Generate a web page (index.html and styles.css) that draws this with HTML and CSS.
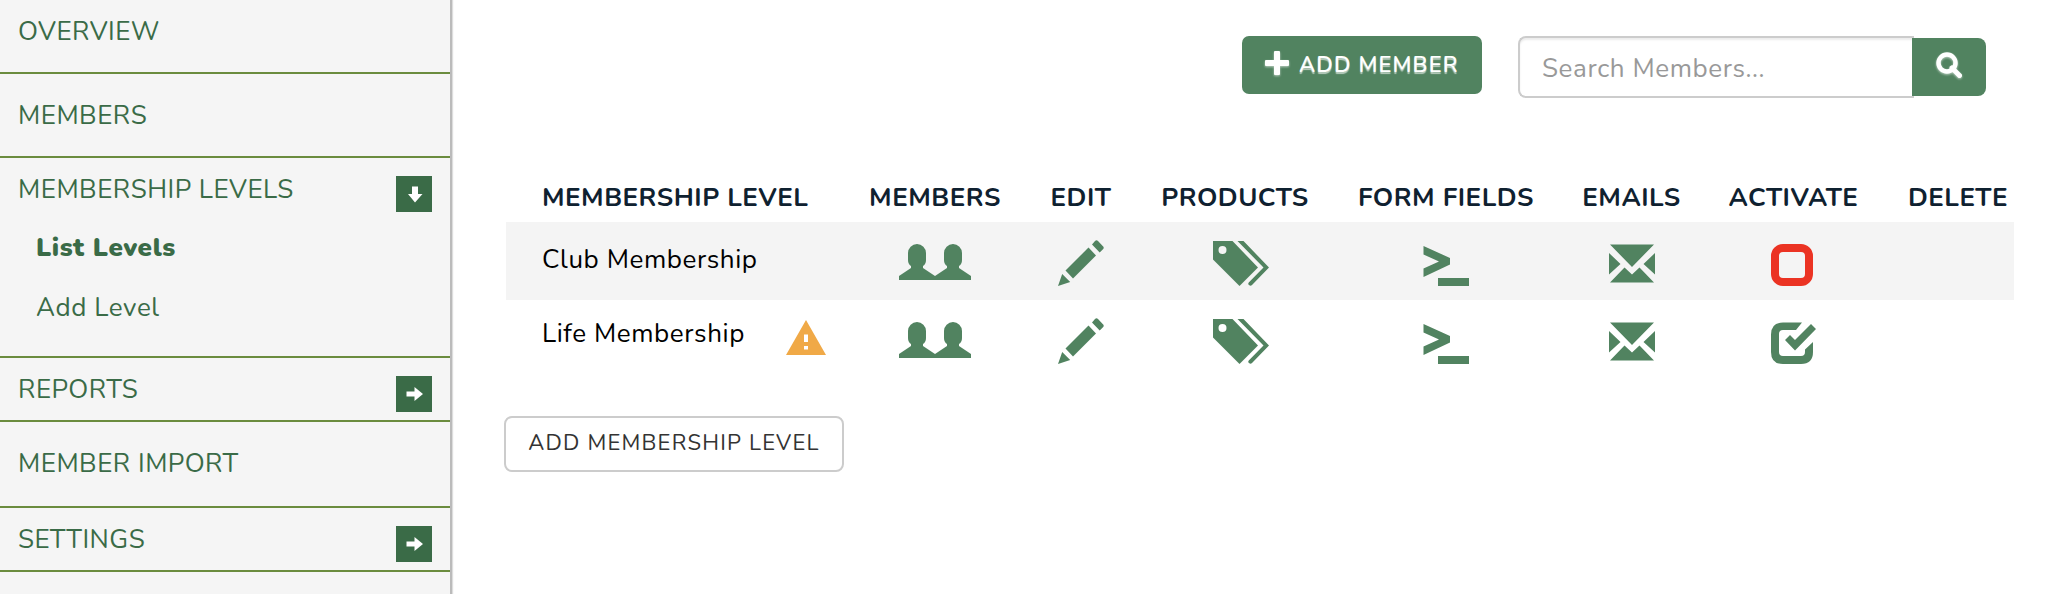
FILE: index.html
```html
<!DOCTYPE html>
<html lang="en">
	<head>
		<meta charset="utf-8">
		<title>Membership Levels</title>
		<link rel="stylesheet" href="styles.css">
	</head>
	<body>
		<svg class="sprite" width="0" height="0">
			<symbol id="right" viewBox="0 0 36 36"><path d="M10.5 15.5h8V11l8.5 7-8.5 7v-4.5h-8z"/></symbol>
			<symbol id="down" viewBox="0 0 36 36"><path d="M16 10.500h6v7.500h4.500L19 26.500 12 18h4z"/></symbol>
			<symbol id="people" viewBox="0 0 72 36"><path id="man" d="M0 36v-4l12-8v-2q-3-2-3-6V9a9 9 0 0 1 18 0v7q0 4-3 6v2l12 8v4z"/><use href="#man" x="36"/></symbol>
			<symbol id="pencil" viewBox="0 0 46 46"><path d="M0 46l4.200-12 8 8zM7.500 30.500L30.500 7.500 38 15.500 15 38.500zM34 4.500L37 1q1.500-1.500 3 0l5.200 5.500q1 1.200 0 2.500L41.700 12.500z"/></symbol>
			<symbol id="tags" viewBox="0 0 56 45"><path fill-rule="evenodd" d="M0 0h19.500L45 26.500 26.500 45 0 18.500zM9.500 5a4 4 0 1 0 0 8 4 4 0 1 0 0-8z"/><path d="M24.500 0h6L56 26.500 39 44q-1.500 1.500-3 0-1.500-1.300 0-2.700L50.500 26.500z"/></symbol>
			<symbol id="console" viewBox="0 0 46 40"><path d="M.5 0L27 12v6.500L.5 31v-8.500L16 15.500.5 8.500zM15 32h31v8H15z"/></symbol>
			<symbol id="mail" viewBox="0 0 46 39"><path d="M1 .5h44L23 23zM0 9l11.500 11L0 30.500zM46 9L34.500 20 46 30.500zM15.500 23.500l7.500 7 7.500-7L45 38.500H1z"/></symbol>
			<symbol id="box" viewBox="0 0 46 42"><rect x="4" y="4" width="34" height="34" rx="8" fill="none" stroke="currentColor" stroke-width="8"/></symbol>
			<symbol id="check" viewBox="0 0 46 42"><path d="M31 .5L25 8H12q-4 0-4 4v18q0 4 4 4h18q4 0 4-4v-2.500L42 20v10q0 12-12 12H12Q0 42 0 30V12.500Q0 .5 12 .5zM14 18l5-5 5 5L40 2l5 5-21 21.500z"/></symbol>
			<symbol id="warning" viewBox="0 0 40 35"><path fill-rule="evenodd" d="M20 0l20 35H0zM18 14.500v7.500h4v-7.500zM18 26v3.500h4V26z"/></symbol>
			<symbol id="plus" viewBox="0 0 24 24"><path d="M9 1q0-1 1-1h4q1 0 1 1v8h8q1 0 1 1v4q0 1-1 1h-8v8q0 1-1 1h-4q-1 0-1-1v-8H1q-1 0-1-1v-4q0-1 1-1h8z"/></symbol>
			<symbol id="search" viewBox="0 0 26 26"><path d="M16 16l7.500 7.500" stroke="currentColor" stroke-width="5" stroke-linecap="round"/><circle cx="11" cy="11" r="8.500" fill="none" stroke="currentColor" stroke-width="4.500"/></symbol>
		</svg>
		<div class="page">
			<ul class="sidebar">
				<li class="overview"><a>OVERVIEW</a></li>
				<li class="members"><a>MEMBERS</a></li>
				<li class="levels">
					<div class="parent"><a>MEMBERSHIP LEVELS</a><span class="toggle"><svg><use href="#down"/></svg></span></div>
					<ul class="submenu">
						<li class="active"><a>List Levels</a></li>
						<li><a>Add Level</a></li>
					</ul>
				</li>
				<li><div class="parent"><a>REPORTS</a><span class="toggle"><svg><use href="#right"/></svg></span></div></li>
				<li class="import"><a>MEMBER IMPORT</a></li>
				<li><div class="parent"><a>SETTINGS</a><span class="toggle"><svg><use href="#right"/></svg></span></div></li>
			</ul>
			<div class="content">
				<div class="toolbar">
					<button class="btn-add"><svg class="plus"><use href="#plus"/></svg><span>ADD MEMBER</span></button>
					<div class="search">
						<input type="text" placeholder="Search Members...">
						<button><svg><use href="#search"/></svg></button>
					</div>
				</div>
				<table>
					<colgroup>
						<col class="c-level"><col class="c-members"><col class="c-edit"><col class="c-products"><col class="c-fields"><col class="c-emails"><col class="c-activate"><col class="c-delete">
					</colgroup>
					<thead>
						<tr>
							<th class="name">MEMBERSHIP LEVEL</th>
							<th>MEMBERS</th>
							<th>EDIT</th>
							<th>PRODUCTS</th>
							<th>FORM FIELDS</th>
							<th>EMAILS</th>
							<th>ACTIVATE</th>
							<th class="delete">DELETE</th>
						</tr>
					</thead>
					<tbody>
						<tr class="odd">
							<td class="name"><div><span class="club">Club Membership</span></div></td>
							<td><svg class="people"><use href="#people"/></svg></td>
							<td><svg class="pencil"><use href="#pencil"/></svg></td>
							<td><svg class="tags"><use href="#tags"/></svg></td>
							<td><svg class="console"><use href="#console"/></svg></td>
							<td><svg class="mail"><use href="#mail"/></svg></td>
							<td><svg class="box off"><use href="#box"/></svg></td>
							<td></td>
						</tr>
						<tr>
							<td class="name"><div><span class="life">Life Membership</span><svg class="warning"><use href="#warning"/></svg></div></td>
							<td><svg class="people"><use href="#people"/></svg></td>
							<td><svg class="pencil"><use href="#pencil"/></svg></td>
							<td><svg class="tags"><use href="#tags"/></svg></td>
							<td><svg class="console"><use href="#console"/></svg></td>
							<td><svg class="mail"><use href="#mail"/></svg></td>
							<td><svg class="box"><use href="#check"/></svg></td>
							<td></td>
						</tr>
					</tbody>
				</table>
				<button class="btn-level">ADD MEMBERSHIP LEVEL</button>
			</div>
		</div>
	</body>
</html>
```
FILE: styles.css
```css
html,button,input{ font-family: Nunito, Lato, sans-serif; }
*{ box-sizing: border-box; }
body{ margin: 0; background: #fff; overflow: hidden; }
ul{ margin: 0; padding: 0; list-style: none; }
svg{ display: block; fill: currentColor; }
button{ border: 0; padding: 0; }
.sprite{ position: absolute; }
.page{ display: flex; height: 594px; }

.sidebar{ width: 452px; background: #f5f5f5; border-right: 2px solid #bbb; box-shadow: 1px 0 1px #ddd; color: #3a6b47; font-size: 26px; line-height: 32px; letter-spacing: 0.5px; }
.sidebar > li{ height: 64px; padding: 16px 18px 0; border-bottom: 2px solid #6b8c3e; }
.sidebar a{ display: block; }
.sidebar .overview{ height: 74px; }
.sidebar .members{ height: 84px; padding-top: 26px; }
.sidebar .levels{ height: 200px; }
.sidebar .import{ height: 86px; padding-top: 26px; }
.parent{ display: flex; justify-content: space-between; }
.toggle{ width: 36px; height: 36px; margin-top: 2px; background: #3a6b47; color: #fff; }
.toggle svg{ width: 36px; height: 36px; }
.submenu{ padding: 20px 0 0 18px; }
.submenu li{ height: 60px; letter-spacing: 0.6px; }
.submenu .active{ font-weight: 900; }

.content{ flex: 1; padding: 36px 0 0 52px; }
.toolbar{ display: flex; margin-left: 738px; height: 62px; }
.btn-add{ display: flex; align-items: center; width: 240px; height: 58px; padding-left: 23px; border-radius: 7px; background: #518360; color: #fff; font-size: 22px; font-weight: 600; letter-spacing: 1.1px; text-shadow: 0 2px 1px rgba(255,255,255,.6); }
.plus{ width: 24px; height: 24px; margin: -4px 10px 0 0; filter: drop-shadow(0 1px 1px rgba(255,255,255,.6)); }
.search{ display: flex; margin-left: 36px; }
.search input{ width: 396px; height: 62px; padding: 2px 22px 0; border: 2px solid #ccc; border-right: 0; border-radius: 8px 0 0 8px; box-shadow: inset 0 2px 2px rgba(0,0,0,.08); font-size: 26px; letter-spacing: 0.6px; }
.search input::placeholder{ color: #999; }
.search button{ width: 74px; height: 58px; margin: 2px 0 0 -2px; padding: 0 0 4px 24px; border-radius: 0 8px 8px 0; background: #518360; color: #fff; z-index: 1; }
.search svg{ width: 26px; height: 26px; filter: drop-shadow(0 1px 1px rgba(255,255,255,.6)); }

table{ width: 1508px; margin: 74px 0 0 2px; table-layout: fixed; border-collapse: collapse; }
.c-level{ width: 338px; }
.c-members{ width: 182px; }
.c-edit{ width: 110px; }
.c-products{ width: 198px; }
.c-fields{ width: 224px; }
.c-emails{ width: 147px; }
.c-activate{ width: 177px; }
.c-delete{ width: 132px; }
th,td{ padding: 0; text-align: center; vertical-align: top; }
th{ height: 50px; padding-top: 10px; color: #0f2130; font-size: 26px; line-height: 32px; font-weight: 700; letter-spacing: 0.5px; white-space: nowrap; }
td{ height: 78px; font-size: 26px; line-height: 32px; letter-spacing: 0.6px; color: #000; }
.odd{ background: #f4f4f4; }
.name{ padding-left: 36px; text-align: left; }
.delete{ padding-left: 26px; text-align: left; }
.name div{ display: flex; }
.club{ margin-top: 22px; }
.life{ width: 244px; margin-top: 18px; }
td svg{ margin: 18px auto 0; color: #518360; }
td .people{ width: 72px; height: 36px; margin-top: 22px; }
td .pencil{ width: 46px; height: 46px; }
td .tags{ width: 56px; height: 45px; margin-top: 19px; position: relative; left: 6px; }
td .console{ width: 46px; height: 40px; margin-top: 24px; }
td .mail{ width: 46px; height: 39px; margin-top: 22px; }
td .box{ width: 46px; height: 42px; margin-top: 22px; }
td .off{ color: #eb3323; }
td .warning{ width: 40px; height: 35px; margin: 20px 0 0; color: #f0a947; }
.btn-level{ display: block; width: 340px; height: 56px; margin-top: 38px; border: 2px solid #ccc; border-radius: 8px; background: #fff; color: #333; font-size: 22px; letter-spacing: 1.2px; padding-bottom: 2px; }
```
